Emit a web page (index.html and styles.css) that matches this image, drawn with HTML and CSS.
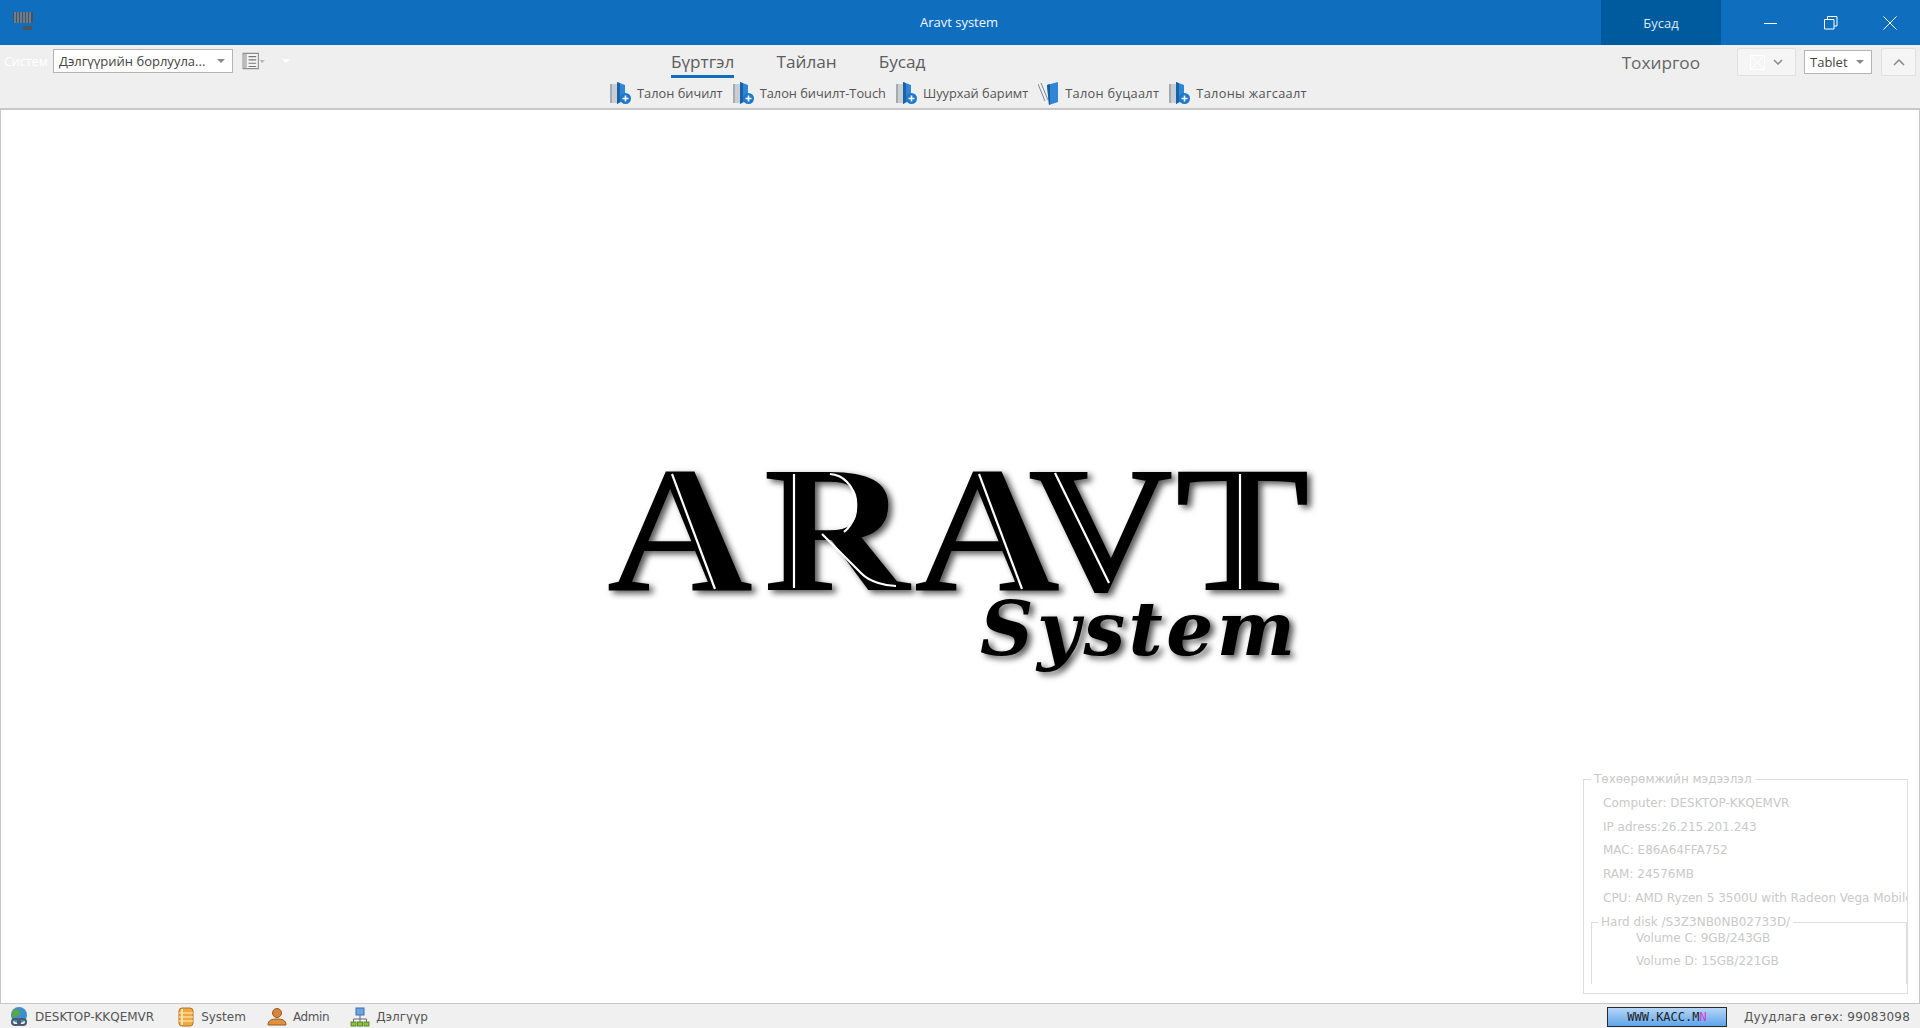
FILE: index.html
```html
<!DOCTYPE html>
<html lang="mn">
<head>
<meta charset="utf-8">
<title>Aravt system</title>
<link rel="stylesheet" href="styles.css">
</head>
<body>
<svg class="defs" width="0" height="0" aria-hidden="true">
  <defs>
    <symbol id="doc" viewBox="0 0 22 24">
      <path d="M0 3h8v19H0z" fill="#c9ced2"/>
      <path d="M0 3h2v19H0z" fill="#a3abb2"/>
      <path d="M7 1l8 3v15l-8 4z" fill="#2f86d6"/>
      <path d="M7 1l3 1.300v18.700l-3 2z" fill="#1a62a8"/>
      <circle cx="15.500" cy="17.500" r="5.500" fill="#1f78c8"/>
      <path d="M15.500 14.500v6M12.500 17.500h6" stroke="#fff" stroke-width="1.600"/>
    </symbol>
    <symbol id="doc-back" viewBox="0 0 22 24">
      <path d="M0 3l7 17M3 2l7 17" stroke="#7d8a94" stroke-width="1" fill="none"/>
      <path d="M9 4l11-3v20l-9 3z" fill="#2f86d6"/>
      <path d="M9 4l3-1v20l-1 1z" fill="#175c9e"/>
    </symbol>
  </defs>
</svg>

<header class="titlebar">
  <svg class="app-icon" viewBox="0 0 20 20" width="20" height="20" aria-hidden="true">
    <path d="M0 0h20v11H0z" fill="#46525f"/>
    <path d="M2 0v11M5 0v11M8 0v11M11 0v11M14 0v11M17 0v11" stroke="#8fa9c0" stroke-width="1"/>
    <path d="M10 14h9v4h-9z" fill="#4a5560"/>
  </svg>
  <div class="title">Aravt system</div>
  <button class="other-btn">Бусад</button>
  <div class="win-controls">
    <span class="win-btn"><svg width="14" height="14" viewBox="0 0 14 14"><path d="M0 7.500h13" stroke="#fff" stroke-width="1"/></svg></span>
    <span class="win-btn"><svg width="14" height="14" viewBox="0 0 14 14"><path d="M.5 3.500h9.500v9.500H.5zM3.500 3.500V.5H13v9.500h-3" stroke="#fff" fill="none"/></svg></span>
    <span class="win-btn"><svg width="14" height="14" viewBox="0 0 14 14"><path d="M.5.5l13 13M13.500.5l-13 13" stroke="#fff" fill="none"/></svg></span>
  </div>
</header>
<div class="top-strip"><i class="strip-blue"></i><i class="strip-white"></i></div>

<section class="ribbon">
  <div class="ribbon-top">
    <div class="rib-left">
      <span class="sys-label">Систем</span>
      <div class="select select-wide"><span>Дэлгүүрийн борлуула...</span><i class="caret"></i></div>
      <svg class="list-icon" width="24" height="18" viewBox="0 0 22 16" aria-hidden="true">
        <path d="M1 1h14v14H1z" fill="#f4f4f4" stroke="#8c8c8c"/>
        <path d="M1.500 1.500h3v13h-3z" fill="#bdbdbd"/>
        <path d="M6 4h7M6 7h7M6 10h7M6 13h7" stroke="#777"/>
        <path d="M16 7h5l-2.500 3z" fill="#bbb"/>
      </svg>
      <i class="caret caret-white"></i>
    </div>
    <nav class="tabs">
      <span class="tab tab-active">Бүртгэл</span>
      <span class="tab">Тайлан</span>
      <span class="tab">Бусад</span>
    </nav>
    <div class="rib-right">
      <span class="settings">Тохиргоо</span>
      <div class="flat-btn flat-wide">
        <svg width="15" height="15" viewBox="0 0 15 15" aria-hidden="true"><path d="M.5.5h14v14H.5zM.5.5l14 14M14.500.5l-14 14" stroke="#fff" fill="none"/></svg>
        <svg width="10" height="6" viewBox="0 0 10 6" aria-hidden="true"><path d="M1 1l4 4 4-4" stroke="#888" stroke-width="1.500" fill="none"/></svg>
      </div>
      <div class="select select-tablet"><span>Tablet</span><i class="caret"></i></div>
      <div class="flat-btn flat-up">
        <svg width="12" height="7" viewBox="0 0 12 7" aria-hidden="true"><path d="M1 6l5-5 5 5" stroke="#888" stroke-width="1.500" fill="none"/></svg>
      </div>
    </div>
  </div>
  <div class="ribbon-items">
    <span class="rib-item"><svg class="ico"><use href="#doc"/></svg>Талон бичилт</span>
    <span class="rib-item"><svg class="ico"><use href="#doc"/></svg>Талон бичилт-Touch</span>
    <span class="rib-item"><svg class="ico"><use href="#doc"/></svg>Шуурхай баримт</span>
    <span class="rib-item"><svg class="ico"><use href="#doc-back"/></svg>Талон буцаалт</span>
    <span class="rib-item"><svg class="ico"><use href="#doc"/></svg>Талоны жагсаалт</span>
  </div>
</section>

<main class="content">
  <svg class="logo" width="740" height="240" viewBox="0 0 740 240" role="img" aria-label="Aravt System">
    <g class="logo-art">
      <text class="big" transform="scale(1.125 1)" x="15 154 288 389 520" y="140">ARAVT</text>
      <text class="script" x="390" y="205">System</text>
    </g>
    <g class="inlines">
      <path d="M82 24L125 139"/>
      <path d="M240 24c28 2 34 42 14 58M232 84l40 40c8 8 24 12 34 12"/>
      <path d="M389 24L432 139"/>
      <path d="M465 23L519 133"/>
      <path d="M650 24V139"/>
      <path d="M204 24V138"/>
    </g>
  </svg>

  <fieldset class="device">
    <legend>Төхөөрөмжийн мэдээлэл</legend>
    <div class="dev-row">Computer: DESKTOP-KKQEMVR</div>
    <div class="dev-row">IP adress:26.215.201.243</div>
    <div class="dev-row">MAC: E86A64FFA752</div>
    <div class="dev-row">RAM: 24576MB</div>
    <div class="dev-row">CPU: AMD Ryzen 5 3500U with Radeon Vega Mobile Gfx</div>
    <fieldset class="disk">
      <legend>Hard disk /S3Z3NB0NB02733D/</legend>
      <div class="vol-row">Volume C: 9GB/243GB</div>
      <div class="vol-row">Volume D: 15GB/221GB</div>
    </fieldset>
  </fieldset>
</main>

<footer class="statusbar">
  <span class="st-item st-pc">
    <svg width="20" height="20" viewBox="0 0 20 20" aria-hidden="true">
      <circle cx="10" cy="8" r="8" fill="#3f8fc9"/>
      <path d="M5 3c3-2 5 0 6 2s-1 4-3 4-2 3-4 1-1-5 1-7z" fill="#5aa845"/>
      <rect x="3" y="12" width="8" height="6" rx="3" fill="none" stroke="#4a5a6a" stroke-width="2"/>
      <rect x="9" y="12" width="8" height="6" rx="3" fill="none" stroke="#4a5a6a" stroke-width="2"/>
    </svg>DESKTOP-KKQEMVR</span>
  <span class="st-item st-db">
    <svg width="16" height="20" viewBox="0 0 16 20" aria-hidden="true">
      <rect x="1" y="1" width="14" height="18" rx="3" fill="#f0a93f" stroke="#b87520"/>
      <path d="M1 6h14M1 10h14M1 14h14" stroke="#fff2d0"/>
      <path d="M4 2v16" stroke="#ffe2a8" stroke-width="2"/>
    </svg>System</span>
  <span class="st-item st-user">
    <svg width="20" height="20" viewBox="0 0 20 20" aria-hidden="true">
      <circle cx="10" cy="6" r="4.500" fill="#d8853a" stroke="#9a5a20"/>
      <path d="M1 18c0-5 4-6 9-6s9 1 9 6z" fill="#e0913f" stroke="#9a5a20"/>
    </svg>Admin</span>
  <span class="st-item">
    <svg width="20" height="20" viewBox="0 0 20 20" aria-hidden="true">
      <rect x="6" y="1" width="8" height="7" fill="#6aa6e0" stroke="#3a6ea8"/>
      <path d="M10 8v4M3.500 15v-3h13v3M10 12v3" stroke="#667" fill="none"/>
      <rect x="1" y="15" width="5" height="4" fill="#8fbf3f" stroke="#5a8a20"/>
      <rect x="7.500" y="15" width="5" height="4" fill="#8fbf3f" stroke="#5a8a20"/>
      <rect x="14" y="15" width="5" height="4" fill="#8fbf3f" stroke="#5a8a20"/>
    </svg>Дэлгүүр</span>
  <span class="st-spacer"></span>
  <span class="kacc">WWW.KACC.M<b>N</b></span>
  <span class="call">Дуудлага өгөх: 99083098</span>
</footer>
</body>
</html>
```

FILE: styles.css
```css
* { box-sizing: border-box; }
html, body { margin: 0; padding: 0; height: 100%; overflow: hidden; }
body {
  width: 1920px;
  height: 1028px;
  display: flex;
  flex-direction: column;
  background: #efefef;
  font-family: "DejaVu Sans", sans-serif;
  color: #555;
}
.defs { display: block; height: 0; }

/* title bar */
.titlebar {
  flex: 0 0 45px;
  display: flex;
  align-items: flex-start;
  background: #106ebe;
  color: #fff;
}
.app-icon { margin: 12px 0 0 13px; flex: none; }
.title {
  flex: 1;
  text-align: center;
  font: 13px/45px "Open Sans", sans-serif;
  color: #f0f6fc;
  padding-left: 284px;
}
.other-btn {
  width: 120px;
  height: 45px;
  border: 0;
  background: #005a9e;
  color: #dbe9f5;
  font: 13px "Open Sans", sans-serif;
}
.win-controls { display: flex; width: 199px; padding-left: 20px; }
.win-btn { flex: 1; display: flex; align-items: center; justify-content: center; height: 45px; }
.top-strip { height: 1px; margin-top: -46px; margin-bottom: 45px; display: flex; padding-left: 809px; flex: none; }
.strip-blue { width: 59px; background: #0a78d6; }
.strip-white { width: 242px; background: #fff; }

/* ribbon */
.ribbon { flex: 0 0 63px; background: #efefef; }
.ribbon-top {
  height: 34px;
  display: grid;
  grid-template-columns: 667px 1fr auto;
  align-items: center;
  padding: 0 4px;
}
.rib-left { display: flex; align-items: center; margin-top: -2px; }
.sys-label { font: 12.500px "Open Sans", sans-serif; color: #fff; width: 49px; }
.select {
  height: 24px;
  display: flex;
  align-items: center;
  background: #fff;
  border: 1px solid #b4b4b4;
  font: 13px "Open Sans", sans-serif;
  color: #444;
  padding: 0 5px;
}
.select span { flex: 1; white-space: nowrap; overflow: hidden; }
.select-wide { width: 180px; }
.select-tablet { width: 68px; margin-right: 9px; }
.caret {
  width: 0; height: 0;
  border: 4px solid transparent;
  border-top: 4px solid #888;
  border-bottom: 0;
  margin-right: 2px;
}
.caret-white { border-top-color: #fff; margin-left: 16px; }
.list-icon { margin-left: 9px; }
.tabs { display: flex; gap: 42px; height: 34px; align-items: center; }
.tab {
  font: 17.200px "Open Sans", sans-serif;
  color: #5d5d5d;
  height: 32px;
  padding-top: 3px;
  line-height: 25px;
}
.tab-active { border-bottom: 3px solid #106ebe; }
.rib-right { display: flex; align-items: center; }
.settings { font: 17.200px "Open Sans", sans-serif; color: #666; margin-right: 37px; }
.flat-btn {
  height: 28px;
  display: flex;
  align-items: center;
  justify-content: center;
  background: #f5f5f5;
  border: 1px solid #e0e0e0;
  border-radius: 2px;
}
.flat-wide { width: 59px; gap: 8px; margin-right: 8px; }
.flat-up { width: 35px; }
.ribbon-items {
  height: 27px;
  display: flex;
  justify-content: center;
  align-items: center;
  padding-right: 3px;
}
.rib-item {
  display: flex;
  align-items: center;
  gap: 5px;
  font: 12.800px "Open Sans", sans-serif;
  color: #555;
  margin: 0 5px;
  white-space: nowrap;
}
.rib-item:nth-child(n+4) { letter-spacing: .3px; }
.ico { width: 22px; height: 24px; flex: none; }

/* main */
.content {
  flex: 1;
  min-height: 0;
  display: grid;
  background: #fff;
  border: 1px solid #c8c8c8;
  border-top-width: 2px;
}
.logo { grid-area: 1 / 1; margin: 340px 0 0 589px; }
.logo-art { filter: drop-shadow(4px 3px 3px #555); }
.big { font: bold 180px "Liberation Serif", serif; fill: #000; }
.script {
  font: italic bold 74px "DejaVu Serif", serif;
  fill: #000;
  letter-spacing: 3.500px;
}
.inlines path { fill: none; stroke: #fff; stroke-width: 2.200; }

.device {
  grid-area: 1 / 1;
  justify-self: end;
  align-self: end;
  width: 325px;
  height: 222px;
  margin: 0 11px 9px 0;
  padding: 6px 0 0;
  border: 1.500px solid #dedede;
  font: 12px "DejaVu Sans", sans-serif;
  color: #c9c9c9;
  min-width: 0;
}
.device legend { margin-left: 7px; padding: 0 3px; line-height: 14px; }
.dev-row {
  height: 23.700px;
  line-height: 23.700px;
  padding-left: 19px;
  white-space: nowrap;
  overflow: hidden;
}
.disk {
  margin: 5px 0 0 7px;
  padding: 0;
  height: 69px;
  border: 1.500px solid #dedede;
  border-bottom-width: 0;
  min-width: 0;
}
.disk legend { margin-left: 6px; padding: 0 3px; margin-bottom: -2px; }
.vol-row { height: 22.500px; line-height: 22.500px; padding-left: 44px; white-space: nowrap; }

/* status bar */
.statusbar {
  flex: 0 0 24px;
  display: flex;
  align-items: center;
  background: #f0f0f0;
  font: 12px "DejaVu Sans", sans-serif;
  color: #555;
  padding: 2px 10px 0 9px;
}
.st-item { display: flex; align-items: center; gap: 6px; margin-right: 21px; white-space: nowrap; }
.st-pc { margin-right: 24px; }
.st-db { gap: 7px; margin-right: 21px; }
.st-user { letter-spacing: -.4px; }
.st-spacer { flex: 1; }
.kacc {
  width: 120px;
  height: 20px;
  display: flex;
  align-items: center;
  justify-content: center;
  border: 1px solid #2a2a2a;
  background: linear-gradient(#b6d6f7, #5ea4ea);
  font: 12px "DejaVu Sans Mono", monospace;
  color: #222;
  margin-right: 17px;
}
.kacc b { font-weight: normal; color: #d83ad0; }
.call { letter-spacing: .2px; }
```
